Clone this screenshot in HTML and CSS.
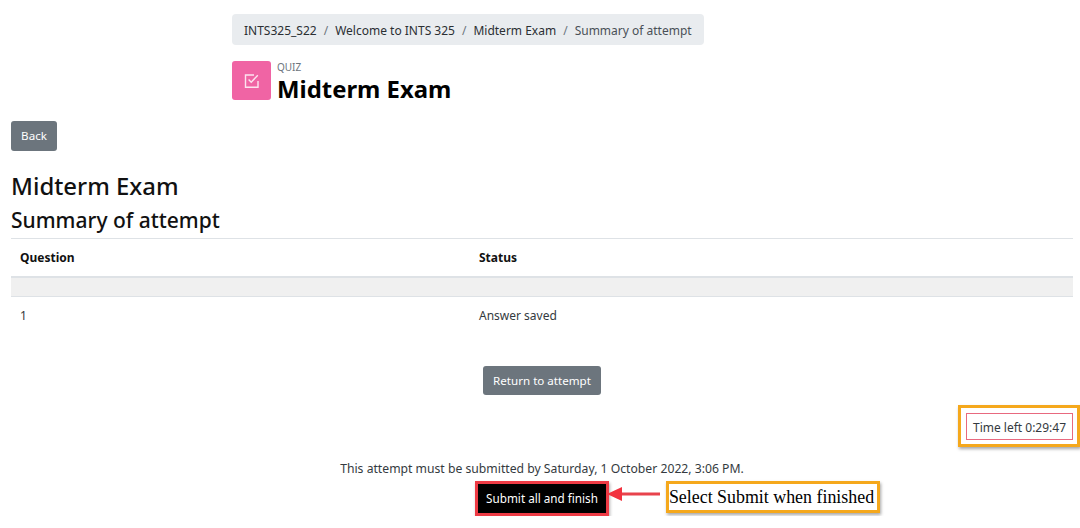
FILE: index.html
```html
<!DOCTYPE html>
<html lang="en">
<head>
    <meta charset="UTF-8">
    <meta name="viewport" content="width=device-width, initial-scale=1.0">
    <title>Summary of attempt</title>
    <link rel="stylesheet" href="styles.css">
</head>
<body>

<div class="page-top">
    <div class="breadcrumb">
        <a href="#">INTS325_S22</a><span class="sep">/</span>
        <a href="#">Welcome to INTS 325</a><span class="sep">/</span>
        <a href="#">Midterm Exam</a><span class="sep">/</span>
        <a href="#">Summary of attempt</a>
    </div>
    <div class="activity-header">
        <div class="activity-icon">
            <svg width="16" height="16" viewBox="0 0 16 16" fill="none" stroke="#fde3ef" stroke-width="1.4">
                <path d="M14 8v6.3H1.5V2h8.5"/>
                <path d="M4.6 6.6l2.6 2.6 6.6-7"/>
            </svg>
        </div>
        <div>
            <div class="activity-type">QUIZ</div>
            <h1>Midterm Exam</h1>
        </div>
    </div>
</div>

<div class="content">
    <button class="btn btn-back" type="button">Back</button>
    <h2>Midterm Exam</h2>
    <h3>Summary of attempt</h3>

    <table class="summary">
        <thead>
            <tr>
                <th class="col-question">Question</th>
                <th>Status</th>
            </tr>
        </thead>
        <tbody>
            <tr class="divider"><td colspan="2"></td></tr>
            <tr>
                <td>1</td>
                <td>Answer saved</td>
            </tr>
        </tbody>
    </table>

    <div class="center return-row">
        <button class="btn" type="button">Return to attempt</button>
    </div>

    <div class="timer-row">
        <div class="highlight timer-frame">
            <div class="timer">Time left 0:29:47</div>
        </div>
    </div>

    <p class="center due">This attempt must be submitted by Saturday, 1 October 2022, 3:06 PM.</p>

    <div class="center submit-row">
        <button class="btn-submit" type="button">Submit all and finish</button>
        <!-- annotation drawn over the screenshot -->
        <div class="note">
            <svg class="note-arrow" width="53" height="16" viewBox="0 0 53 16">
                <path d="M53 8H12" stroke="#e8434c" stroke-width="3"/>
                <path d="M0 8l15-7v14z" fill="#f2323f"/>
            </svg>
            <div class="highlight note-text">Select Submit when finished</div>
        </div>
    </div>
</div>

</body>
</html>
```

FILE: styles.css
```css
body {
    margin: 0;
    background-color: #fff;
    color: #343a40;
    font-family: "Noto Sans", "Open Sans", sans-serif;
    font-size: 12px;
    line-height: 1.5;
    overflow: hidden;
}

/* Top of the page */
.page-top {
    padding: 14px 0 0 232px;
}
.breadcrumb {
    display: flex;
    align-items: center;
    width: 472px;
    height: 31px;
    box-sizing: border-box;
    padding: 3px 12px 0;
    background-color: #e9ecef;
    border-radius: 4px;
    white-space: nowrap;
}
.breadcrumb a {
    color: #2b2f33;
    text-decoration: none;
}
.breadcrumb a:last-child {
    color: #495057;
}
.breadcrumb .sep {
    color: #6c757d;
    padding: 0 7px;
}
.activity-header {
    display: flex;
    margin-top: 16px;
}
.activity-icon {
    display: flex;
    align-items: center;
    justify-content: center;
    width: 39px;
    height: 39px;
    margin-right: 6px;
    background-color: #f064a4;
    border-radius: 3px;
}
.activity-type {
    color: #6c757d;
    font-size: 10px;
    line-height: 12px;
}
h1 {
    margin: 2px 0 0;
    color: #000;
    font-size: 23.9px;
    font-weight: 700;
    line-height: 28px;
}

/* Main column */
.content {
    padding: 18px 7px 0 11px;
}
h2, h3 {
    margin: 0;
    color: #111;
    font-weight: 500;
}
h2 {
    margin-top: 20px;
    font-size: 23.9px;
    line-height: 30px;
}
h3 {
    margin-top: 5px;
    font-size: 21px;
    line-height: 28px;
}
.btn {
    height: 29px;
    padding: 0 10px;
    background-color: #6c757d;
    border: none;
    border-radius: 3px;
    color: #fff;
    font: inherit;
    font-size: 11.6px;
}
.btn-back {
    display: block;
    height: 30px;
    width: 46px;
    padding: 0;
}
.center {
    text-align: center;
}

/* Question table */
.summary {
    width: 100%;
    margin-top: 4px;
    border-collapse: collapse;
    color: #343a40;
}
.summary th {
    height: 37px;
    padding: 0 9px;
    border-top: 1px solid #dee2e6;
    border-bottom: 2px solid #dee2e6;
    color: #111;
    font-size: 12px;
    font-weight: 700;
    text-align: left;
}
.col-question {
    width: 441px;
}
.summary td {
    height: 38px;
    padding: 0 9px;
}
.summary .divider td {
    height: 18px;
    padding: 0;
    background-color: #f0f0f0;
    border-bottom: 1px solid #dee2e6;
}

.return-row {
    margin-top: 31px;
    line-height: 0;
}

/* Orange boxes added on top of the screenshot */
.highlight {
    border: 3px solid #f5a81c;
    box-shadow: 1px 2px 3px rgba(0, 0, 0, 0.35);
}
.timer-row {
    display: flex;
    justify-content: flex-end;
    margin: 10px -7px 0 0;
}
.timer-frame {
    display: flex;
    align-items: center;
    justify-content: flex-end;
    box-sizing: border-box;
    width: 122px;
    height: 42px;
    padding: 1px 4px 0 0;
}
.timer {
    width: 107px;
    height: 27px;
    box-sizing: border-box;
    border: 1px solid #e8697f;
    color: #343a40;
    line-height: 27px;
    text-align: center;
}
.due {
    margin: 13px 0 0;
    font-size: 12.2px;
    line-height: 18px;
}

.submit-row {
    position: relative;
    margin-top: 3px;
    height: 35px;
}
.btn-submit {
    width: 134px;
    height: 35px;
    box-sizing: border-box;
    background-color: #000;
    border: 3px solid #ee3b45;
    box-shadow: 1px 2px 3px rgba(0, 0, 0, 0.3);
    color: #fff;
    font: inherit;
    font-size: 11.7px;
}
.note {
    position: absolute;
    top: 0;
    left: 596px;
    display: flex;
    align-items: flex-start;
    height: 32px;
}
.note-arrow {
    margin: 5px 6px 0 0;
}
.note-text {
    box-sizing: border-box;
    width: 214px;
    height: 32px;
    color: #000;
    font-family: "Liberation Serif", serif;
    font-size: 17.9px;
    line-height: 26px;
    text-indent: -3px;
    white-space: nowrap;
}
```
